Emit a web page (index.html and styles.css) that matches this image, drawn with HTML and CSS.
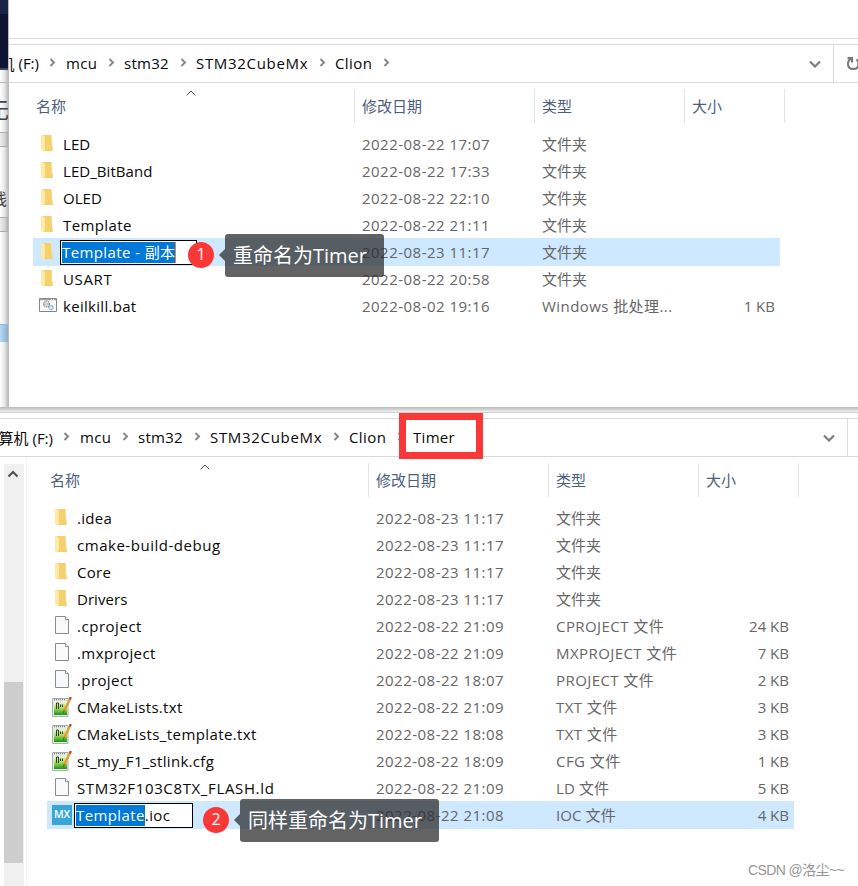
FILE: index.html
```html
<!DOCTYPE html>
<html lang="zh-CN">
<head>
<meta charset="utf-8">
<title>文件资源管理器</title>
<link rel="stylesheet" href="styles.css">
</head>
<body>
<svg class="defs" width="0" height="0">
  <defs>
    <linearGradient id="green" x1="0" x2="0" y1="0" y2="1"><stop offset="0" stop-color="#edf7d8"/><stop offset=".5" stop-color="#a5da55"/><stop offset="1" stop-color="#169315"/></linearGradient>
  </defs>
  <symbol id="folder" viewBox="0 0 20 20"><path d="M3 1h9v11l1 1v4H4z" fill="#f5d06e"/><path d="M11 1h1v11l1 1v3h-1z" fill="#fbe19d"/><path d="M1 1h2l2 2v12l-1.500 3L1 15.500z" fill="#ffe9a5"/></symbol>
  <symbol id="file" viewBox="0 0 20 20"><path d="M1.500 .5h10l3 3V17.500H1.500z" fill="#f8f9fa" stroke="#8c8c8c"/><path d="M11.500 .5v3h3" fill="#fff" stroke="#8c8c8c"/></symbol>
  <symbol id="note" viewBox="0 0 20 20"><path d="M.5 1.500h15.500v18H.5z" fill="#e6ebe8" stroke="#a9b0b0"/><path d="M2 5h13v13H2z" fill="url(#green)"/><path d="M2 2.500h12" stroke="#7b8288" stroke-width="1.500" stroke-dasharray="1 1"/><path d="M4.500 12V6h2v6M8.500 7.500v2.500M10.500 7.500v2.500" stroke="#303a30" fill="none"/><path d="M18 2L12 14" stroke="#e79c22" stroke-width="2.200"/><path d="M18.800 0l-1 2.500" stroke="#ad4437" stroke-width="2.200"/><path d="M12.300 13l-1 3" stroke="#625538"/></symbol>
  <symbol id="bat" viewBox="0 0 20 20"><path d="M1.500 3.500h17v13h-17z" fill="#fbfbfb" stroke="#7f858a"/><path d="M2 4.500h16" stroke="#9ca1a5" stroke-width="1.500"/><path d="M13 4.500h4" stroke="#fff" stroke-dasharray="1 1"/><circle cx="8.500" cy="9" r="2.800" fill="none" stroke="#8b9195" stroke-width="1.600" stroke-dasharray="1.200 .6"/><circle cx="8.500" cy="9" r="1" fill="none" stroke="#8b9195" stroke-width=".6"/><circle cx="13" cy="12.500" r="2.100" fill="#e2f0f8" stroke="#7faac3" stroke-width="1.400" stroke-dasharray="1.200 .5"/></symbol>
  <symbol id="sep" viewBox="0 0 8 10"><path d="M1.500 1L5 4.500 1.500 8" fill="none" stroke="#858585" stroke-width="1.900"/></symbol>
  <symbol id="down" viewBox="0 0 12 8"><path d="M1 1.500l5 5 5-5" fill="none" stroke="#7d7d7d" stroke-width="2.200"/></symbol>
  <symbol id="sort" viewBox="0 0 10 6"><path d="M.7 5.300L5 1l4.300 4.300" fill="none" stroke="#555"/></symbol>
</svg>
<main class="screen">
  <section class="upper">
    <aside class="behind">
      <div class="dark"></div><div class="edge"></div><div class="glyph g1">无</div><div class="tab"></div><div class="glyph g2">线</div><div class="tab tab2"></div><div class="blue"></div>
    </aside>
    <div class="window">
      <div class="ribbon"></div>
      <nav class="address">
        <div class="path"><span class="c0"><b>机</b> (F:)</span><svg><use href="#sep"/></svg><span class="c1">mcu</span><svg><use href="#sep"/></svg><span class="c2">stm32</span><svg><use href="#sep"/></svg><span class="c3">STM32CubeMx</span><svg><use href="#sep"/></svg><span class="c4">Clion</span><svg><use href="#sep"/></svg></div>
        <svg class="down"><use href="#down"/></svg>
        <div class="refresh"><svg width="18" height="18" viewBox="0 0 18 18"><path d="M6.500 3.500C4 4.500 3 6.500 3 9c0 3.500 2.500 5 5.500 5s5-2 5-5c0-2-.8-3.500-2-4.500M2.500 3H7v4.500" fill="none" stroke="#777" stroke-width="2"/></svg></div>
      </nav>
      <div class="head"><svg class="sort"><use href="#sort"/></svg><span>名称</span><span>修改日期</span><span>类型</span><span>大小</span></div>
      <div class="list">
        <div class="row"><svg class="icon"><use href="#folder"/></svg><span class="name tight">LED</span><time>2022-08-22 17:07</time><span>文件夹</span><span class="size"></span></div>
        <div class="row"><svg class="icon"><use href="#folder"/></svg><span class="name tight">LED_BitBand</span><time>2022-08-22 17:33</time><span>文件夹</span><span class="size"></span></div>
        <div class="row"><svg class="icon"><use href="#folder"/></svg><span class="name tight">OLED</span><time>2022-08-22 22:10</time><span>文件夹</span><span class="size"></span></div>
        <div class="row"><svg class="icon"><use href="#folder"/></svg><span class="name">Template</span><time>2022-08-22 21:11</time><span>文件夹</span><span class="size"></span></div>
        <div class="row selected"><svg class="icon"><use href="#folder"/></svg><span class="name edit edit1"><mark>Template - 副本</mark></span><time>2022-08-23 11:17</time><span>文件夹</span><span class="size"></span></div>
        <div class="row"><svg class="icon"><use href="#folder"/></svg><span class="name wide">USART</span><time>2022-08-22 20:58</time><span>文件夹</span><span class="size"></span></div>
        <div class="row"><svg class="icon bat"><use href="#bat"/></svg><span class="name mid">keilkill.bat</span><time>2022-08-02 19:16</time><span class="kind">Windows 批处理...</span><span class="size">1 KB</span></div>
      </div>
    </div>
  </section>
  <section class="lower">
    <div class="shade"></div>
    <nav class="address">
      <div class="path"><span class="c0">算机 (F:)</span><svg><use href="#sep"/></svg><span class="c1">mcu</span><svg><use href="#sep"/></svg><span class="c2">stm32</span><svg><use href="#sep"/></svg><span class="c3">STM32CubeMx</span><svg><use href="#sep"/></svg><span class="c4">Clion</span><svg><use href="#sep"/></svg><span class="c5">Timer</span></div>
      <svg class="down"><use href="#down"/></svg>
      <div class="refresh"></div>
    </nav>
    <div class="body">
      <div class="scroll"><svg width="12" height="8" viewBox="0 0 12 8"><path d="M1.500 6.500L6 2l4.500 4.500" fill="none" stroke="#505050" stroke-width="2"/></svg><div class="thumb"></div></div>
      <div class="files">
        <div class="head"><svg class="sort"><use href="#sort"/></svg><span>名称</span><span>修改日期</span><span>类型</span><span>大小</span></div>
        <div class="list">
          <div class="row"><svg class="icon"><use href="#folder"/></svg><span class="name mid">.idea</span><time>2022-08-23 11:17</time><span>文件夹</span><span class="size"></span></div>
          <div class="row"><svg class="icon"><use href="#folder"/></svg><span class="name loose">cmake-build-debug</span><time>2022-08-23 11:17</time><span>文件夹</span><span class="size"></span></div>
          <div class="row"><svg class="icon"><use href="#folder"/></svg><span class="name mid">Core</span><time>2022-08-23 11:17</time><span>文件夹</span><span class="size"></span></div>
          <div class="row"><svg class="icon"><use href="#folder"/></svg><span class="name tight">Drivers</span><time>2022-08-23 11:17</time><span>文件夹</span><span class="size"></span></div>
          <div class="row"><svg class="icon"><use href="#file"/></svg><span class="name loose">.cproject</span><time>2022-08-22 21:09</time><span class="kind">CPROJECT 文件</span><span class="size">24 KB</span></div>
          <div class="row"><svg class="icon"><use href="#file"/></svg><span class="name">.mxproject</span><time>2022-08-22 21:09</time><span class="kind">MXPROJECT 文件</span><span class="size">7 KB</span></div>
          <div class="row"><svg class="icon"><use href="#file"/></svg><span class="name">.project</span><time>2022-08-22 18:07</time><span class="kind">PROJECT 文件</span><span class="size">2 KB</span></div>
          <div class="row"><svg class="icon note"><use href="#note"/></svg><span class="name mid">CMakeLists.txt</span><time>2022-08-22 21:09</time><span class="kind">TXT 文件</span><span class="size">3 KB</span></div>
          <div class="row"><svg class="icon note"><use href="#note"/></svg><span class="name">CMakeLists_template.txt</span><time>2022-08-22 18:08</time><span class="kind">TXT 文件</span><span class="size">3 KB</span></div>
          <div class="row"><svg class="icon note"><use href="#note"/></svg><span class="name mid">st_my_F1_stlink.cfg</span><time>2022-08-22 18:09</time><span class="kind">CFG 文件</span><span class="size">1 KB</span></div>
          <div class="row"><svg class="icon"><use href="#file"/></svg><span class="name wide">STM32F103C8TX_FLASH.ld</span><time>2022-08-22 21:09</time><span class="kind short">LD 文件</span><span class="size">5 KB</span></div>
          <div class="row selected"><span class="icon mx">MX</span><span class="name edit edit2"><mark>Template</mark>.ioc</span><time>2022-08-22 21:08</time><span class="kind short">IOC 文件</span><span class="size">4 KB</span></div>
        </div>
      </div>
    </div>
  </section>
  <div class="frame"></div>
  <div class="badge b1">1</div><div class="tip t1">重命名为<span>Timer</span></div>
  <div class="badge b2">2</div><div class="tip t2">同样重命名为<span>Timer</span></div>
  <div class="watermark"><span>CSDN @</span>洛尘~~</div>
</main>
</body>
</html>
```
FILE: styles.css
```css
* { box-sizing: border-box; }
body { margin: 0; background: #fff; color: #080808; font: 15px "Open Sans", "Noto Sans CJK SC", sans-serif; }
.defs { position: absolute; }
.screen { position: relative; width: 858px; height: 886px; overflow: hidden; background: #fff; }
.upper { display: flex; height: 407px; }
.behind { width: 8px; flex: none; overflow: hidden; background: linear-gradient(90deg, #fff, #e8e8e8 55%, #bcbcbc); display: flex; flex-direction: column; }
.dark { height: 70px; flex: none; background: linear-gradient(#182348 0 14px, #0d1533 14px 68px, #3b4660 68px); }
.edge { height: 13px; flex: none; border-bottom: 1px solid #b9b9b9; }
.glyph { width: 24px; height: 24px; line-height: 24px; font-size: 22px; color: #444; flex: none; }
.g1 { margin: 14px 0 0 -13px; }
.tab { height: 15px; margin-top: 11px; border: solid #aaa; border-width: 1px 0; background: #0001; flex: none; }
.g2 { margin: 40px 0 0 -9px; font-size: 16px; }
.tab2 { margin-top: 6px; }
.blue { height: 18px; margin-top: 92px; background: linear-gradient(90deg, #b8dafa, #8baec9); border-top: 1px solid #8dbada; flex: none; }
.window { flex: 1; min-width: 0; background: #fff; border-left: 1px solid #bbb; }
.ribbon { height: 39px; border-bottom: 1px solid #d9d9d9; margin-bottom: 5px; }
.address { height: 39px; border: solid #d9d9d9; border-width: 1px 0; display: flex; align-items: center; }
.path { flex: 1; display: flex; align-items: center; height: 100%; padding-bottom: 1px; white-space: nowrap; overflow: hidden; }
.path span { flex: none; }
.path b { font-weight: 400; }
.path svg { width: 8px; height: 10px; flex: none; }
.c0 { width: 40px; display: flex; justify-content: flex-end; white-space: pre; margin-right: 10px; }
.upper .c0 { width: 30px; }
.c1 { width: 31px; margin: 0 11px 0 9px; letter-spacing: .3px; }
.c2 { width: 45px; margin: 0 11px 0 8px; letter-spacing: .25px; }
.c3 { width: 113px; margin: 0 10px 0 8px; letter-spacing: .68px; }
.c4 { width: 37px; margin: 0 11px 0 8px; letter-spacing: .4px; }
.c5 { margin-left: 8px; letter-spacing: .3px; }
.lower .c0 { width: 53px; }
.down { width: 12px; height: 8px; margin-right: 12px; }
.refresh { width: 25px; height: 100%; border-left: 1px solid #d9d9d9; display: flex; align-items: center; padding-left: 11px; overflow: hidden; }
.refresh svg { flex: none; }
.lower .refresh { width: 11px; padding: 0; }
.head { position: relative; margin: 6px 0 0 27px; height: 34px; display: grid; grid-template-columns: 319px 180px 150px 100px; color: #4c607a; }
.head span { border-right: 1px solid #e3e3e3; padding-left: 7px; line-height: 34px; }
.head span:nth-of-type(1) { padding-left: 0; }
.head .sort { position: absolute; left: 150px; top: 1px; width: 10px; height: 6px; }
.list { margin: 7px 0 0 24px; }
.row { width: 747px; height: 28px; margin-bottom: -1px; padding-left: 5px; display: grid; grid-template-columns: 25px 299px 180px 150px 83px; align-items: center; white-space: nowrap; color: #666; line-height: 28px; }
.name { color: #080808; letter-spacing: .4px; }
.tight { letter-spacing: .05px; }
.mid { letter-spacing: .3px; }
.loose { letter-spacing: .53px; }
.wide { letter-spacing: .64px; }
.icon { width: 20px; height: 20px; margin-left: 2px; margin-top: -1px; }
.icon.note, .icon.bat { margin-left: 0; }
.icon.bat { margin-top: -3px; }
.selected { background: #cde8ff; }
time { letter-spacing: .48px; }
.kind { letter-spacing: .43px; }
.short { letter-spacing: .1px; }
.size { text-align: right; }
.row .edit { height: 25px; margin-left: -3px; border: 1px solid #000; background: #fff; line-height: 21px; padding: 1px; }
.edit1 { width: 137px; }
.edit2 { width: 119px; }
mark { display: inline-block; height: 21px; background: #0078d7; color: #fff; }
.edit1 mark { border-right: 1px solid #e88330; }
.lower { height: 479px; }
.shade { height: 11px; background: linear-gradient(#b8b8b8, #e5e5e5 4px, #f9f9f9 5px, #d0d0d0 5px 6px, #fff 6px); }
.body { display: flex; }
.scroll { margin: 7px 0 0 4px; width: 20px; height: 422px; background: #f0f0f0; padding-top: 6px; }
.scroll svg { display: block; margin: 0 3px; }
.thumb { width: 19px; height: 181px; margin-top: 204px; background: #cdcdcd; }
.files { flex: 1; margin-left: 2px; border-left: 1px solid #f3f3f3; }
.files .head { margin: 6px 0 0 23px; }
.files .list { margin-left: 20px; }
.row .mx { background: #38a5d4; width: 20px; margin-left: 0; font: 600 10.5px/19px "Open Sans", sans-serif; letter-spacing: -.2px; text-align: center; color: #fff; }
.frame { position: absolute; left: 399px; top: 413px; width: 84px; height: 46px; border: 7px solid #fb3838; }
.badge { position: absolute; width: 26px; height: 26px; border-radius: 50%; background: #fb3838; color: #fff; text-align: center; font-size: 16px; line-height: 24px; }
.b1 { left: 188px; top: 242px; }
.b2 { left: 203px; top: 807px; }
.tip { position: absolute; height: 43px; padding-left: 8px; border-radius: 3px; background: rgba(45,45,45,.74); color: #fff; font-size: 20px; line-height: 43px; white-space: nowrap; }
.tip::before { content: ""; position: absolute; right: 100%; top: 15px; border: solid transparent; border-width: 6px 6px 6px 0; border-right-color: rgba(45,45,45,.74); }
.tip span { font-weight: 500; }
.t1 { left: 225px; top: 234px; width: 159px; }
.t2 { left: 240px; top: 799px; width: 199px; }
.watermark { position: absolute; left: 748px; top: 860px; font: 14px/20px "Liberation Sans", "Noto Sans CJK SC", sans-serif; letter-spacing: -.6px; color: #969696; white-space: nowrap; }
```
